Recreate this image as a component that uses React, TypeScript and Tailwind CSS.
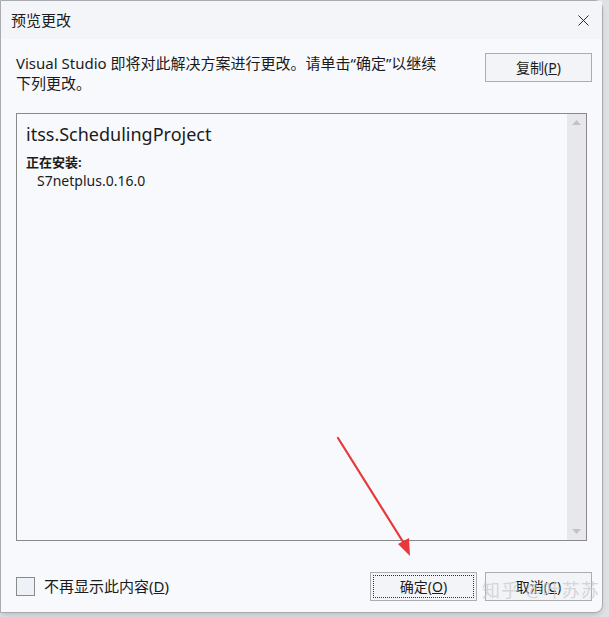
import { X } from "lucide-react";

const font = { fontFamily: '"Noto Sans", "Noto Sans CJK SC", sans-serif' };

const DlgButton = ({ label, hotkey, focused = false }: { label: string; hotkey: string; focused?: boolean }) => {
  return (
    <button className="w-[107px] h-[29px] border border-[#adadad] bg-[#f3f4f8] text-[14px] text-[#1b1b1b] p-[2px]">
      <span
        className={`flex h-full w-full items-center justify-center ${
          focused ? "border border-dotted border-[#333]" : ""
        }`}
      >
        {label}(<span className="underline">{hotkey}</span>)
      </span>
    </button>
  );
};

const App = () => {
  return (
    <div className="w-[609px] h-[617px] bg-[#dfe1e5] overflow-hidden" style={font}>
      <div className="relative w-[603px] h-[613px] flex flex-col bg-[#f7f9fd] border border-[#a9abb0] rounded-br-[8px] rounded-tr-[8px] shadow-md">
        {/* title bar */}
        <div className="h-[38px] flex items-center justify-between pl-[10px] pr-[9px] bg-[#f3f5f9]">
          <span className="text-[15px] text-[#1b1b1b]">预览更改</span>
          <X size={19} strokeWidth={1.2} className="text-[#222]" />
        </div>

        {/* message row */}
        <div className="flex justify-between pl-[15px] pr-[10px] pt-[14px]">
          <p className="text-[15px] leading-[20px] text-[#1b1b1b] w-[445px]">
            Visual Studio 即将对此解决方案进行更改。请单击“确定”以继续
            <br />
            下列更改。
          </p>
          <DlgButton label="复制" hotkey="P" />
        </div>

        {/* changes box */}
        <div className="mx-[15px] mt-[20px] h-[428px] flex border border-[#8a8a8a] bg-[#f7f9fd]">
          <div className="flex-1 pl-[9px] pt-[7px]">
            <div className="text-[18px] leading-[26px] text-[#1b1b1b]">itss.SchedulingProject</div>
            <div className="mt-[6px] text-[13px] leading-[18px] font-bold text-[#1b1b1b]">正在安装:</div>
            <div className="pl-[11px] text-[14px] leading-[20px] text-[#1b1b1b]">S7netplus.0.16.0</div>
          </div>
          <div className="w-[19px] bg-[#e8e8ec] flex flex-col items-center justify-between py-[6px]">
            <svg width="9" height="5" viewBox="0 0 9 5">
              <path d="M0 5 L4.5 0 L9 5 Z" fill="#c2c3c9" />
            </svg>
            <svg width="9" height="5" viewBox="0 0 9 5">
              <path d="M0 0 L4.5 5 L9 0 Z" fill="#c2c3c9" />
            </svg>
          </div>
        </div>

        {/* footer */}
        <div className="flex items-center justify-between pl-[15px] pr-[10px] mt-[31px]">
          <label className="flex items-center gap-[9px] text-[15px] text-[#1b1b1b]">
            <span className="w-[19px] h-[19px] border border-[#8a8a8a] bg-[#eef1f8]" />
            <span>
              不再显示此内容(<span className="underline">D</span>)
            </span>
          </label>
          <div className="flex gap-[8px]">
            <DlgButton label="确定" hotkey="O" focused />
            <DlgButton label="取消" hotkey="C" />
          </div>
        </div>

        {/* watermark */}
        <div className="absolute left-[481px] top-[576px] text-[18px] tracking-[1px] text-[#c8c8c8] opacity-70 pointer-events-none">
          知乎 @叶苏苏
        </div>

        {/* red arrow annotation */}
        <svg className="absolute left-[330px] top-[430px] pointer-events-none" width="90" height="135" viewBox="0 0 90 135">
          <path d="M7 7 L74 114" stroke="#e8383b" strokeWidth="2.2" strokeLinecap="round" />
          <path d="M79 125 L67 113 L78 107 Z" fill="#e8383b" />
        </svg>
      </div>
    </div>
  );
};

export default App;
